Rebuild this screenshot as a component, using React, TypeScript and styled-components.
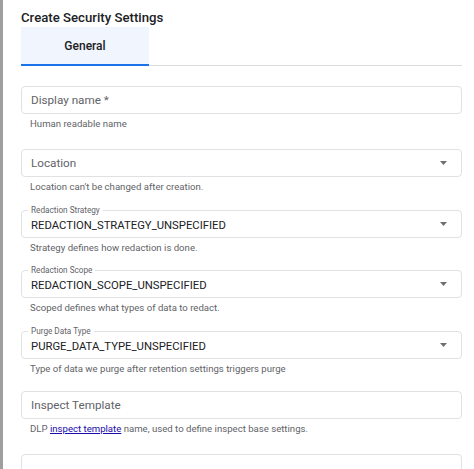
import React from "react";
import styled, { createGlobalStyle } from "styled-components";

const Global = createGlobalStyle`
  html, body { margin: 0; padding: 0; background: #fff; }
  body { font-family: Roboto, "Noto Sans", Arial, sans-serif; }
`;

const Page = styled.div`
  display: flex;
  min-height: 469px;
  border-left: 3px solid #9e9e9e;
  box-sizing: border-box;
`;

const Content = styled.div`
  flex: 1;
  padding: 9px 12px 0 18px;
  display: flex;
  flex-direction: column;
`;

const Title = styled.h1`
  margin: 0;
  font-size: 13.2px;
  line-height: 18px;
  font-weight: 500;
  color: #202124;
`;

const TabBar = styled.div`
  display: flex;
  border-bottom: 1px solid #dadce0;
`;

const Tab = styled.div<{ $active?: boolean }>`
  width: 128px;
  height: 37px;
  display: flex;
  align-items: center;
  justify-content: center;
  background: ${(p) => (p.$active ? "#f1f5fd" : "transparent")};
  border-bottom: 2px solid ${(p) => (p.$active ? "#1a73e8" : "transparent")};
  margin-bottom: -1px;
  font-size: 12px;
  font-weight: 500;
  color: #202124;
`;

const Form = styled.div`
  display: flex;
  flex-direction: column;
  margin-top: 20px;
`;

const Field = styled.div<{ $space: number }>`
  display: flex;
  flex-direction: column;
  height: ${(p) => p.$space}px;
`;

const Box = styled.div`
  position: relative;
  height: 28px;
  box-sizing: border-box;
  border: 1px solid #dfe1e5;
  border-radius: 4px;
  display: flex;
  align-items: center;
  padding: 0 9px;
  background: #fff;
`;

const Placeholder = styled.span`
  font-size: 11.7px;
  color: #5f6368;
`;

const Value = styled.span`
  font-size: 11.3px;
  color: #202124;
  margin-top: 2px;
`;

const FloatLabel = styled.span`
  position: absolute;
  left: 6px;
  top: -6px;
  padding: 0 3px;
  background: #fff;
  font-size: 8.2px;
  line-height: 10px;
  color: #5f6368;
`;

const Arrow = styled.svg`
  position: absolute;
  right: 14px;
  top: 50%;
  margin-top: -2px;
`;

const Helper = styled.div`
  font-size: 9.6px;
  line-height: 12px;
  color: #5f6368;
  padding-left: 9px;
  margin-top: 4px;
`;

const Link = styled.a`
  color: #1a0dab;
  text-decoration: underline;
`;

const Caret = () => (
  <Arrow width="7" height="4" viewBox="0 0 7 4">
    <path d="M0 0 L7 0 L3.5 4 Z" fill="#6f6f6f" />
  </Arrow>
);

export default function App() {
  return (
    <>
      <Global />
      <Page>
        <Content>
          <Title>Create Security Settings</Title>
          <TabBar>
            <Tab $active>General</Tab>
          </TabBar>
          <Form>
            <Field $space={63}>
              <Box>
                <Placeholder>Display name *</Placeholder>
              </Box>
              <Helper>Human readable name</Helper>
            </Field>
            <Field $space={61}>
              <Box>
                <Placeholder>Location</Placeholder>
                <Caret />
              </Box>
              <Helper>Location can't be changed after creation.</Helper>
            </Field>
            <Field $space={60}>
              <Box>
                <FloatLabel>Redaction Strategy</FloatLabel>
                <Value>REDACTION_STRATEGY_UNSPECIFIED</Value>
                <Caret />
              </Box>
              <Helper>Strategy defines how redaction is done.</Helper>
            </Field>
            <Field $space={61}>
              <Box>
                <FloatLabel>Redaction Scope</FloatLabel>
                <Value>REDACTION_SCOPE_UNSPECIFIED</Value>
                <Caret />
              </Box>
              <Helper>Scoped defines what types of data to redact.</Helper>
            </Field>
            <Field $space={60}>
              <Box>
                <FloatLabel>Purge Data Type</FloatLabel>
                <Value>PURGE_DATA_TYPE_UNSPECIFIED</Value>
                <Caret />
              </Box>
              <Helper>Type of data we purge after retention settings triggers purge</Helper>
            </Field>
            <Field $space={63}>
              <Box>
                <Placeholder>Inspect Template</Placeholder>
              </Box>
              <Helper>
                DLP <Link href="#">inspect template</Link> name, used to define inspect base settings.
              </Helper>
            </Field>
            <Field $space={28}>
              <Box />
            </Field>
          </Form>
        </Content>
      </Page>
    </>
  );
}
